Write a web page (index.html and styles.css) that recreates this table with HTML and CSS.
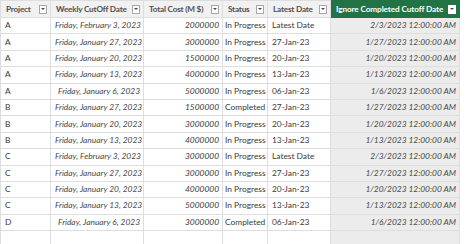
FILE: index.html
```html
<!DOCTYPE html>
<html>
<head>
<meta charset="utf-8">
<link rel="stylesheet" href="styles.css">
</head>
<body>
<table class="grid">
  <colgroup>
    <col class="c-project"><col class="c-week"><col class="c-cost"><col class="c-status"><col class="c-latest"><col class="c-ignore">
  </colgroup>
  <thead>
    <tr>
      <th><div class="hd"><span>Project</span><i class="dd"></i></div></th>
      <th><div class="hd"><span>Weekly CutOff Date</span><i class="dd"></i></div></th>
      <th><div class="hd"><span>Total Cost (M $)</span><i class="dd"></i></div></th>
      <th><div class="hd"><span>Status</span><i class="dd"></i></div></th>
      <th><div class="hd"><span>Latest Date</span><i class="dd"></i></div></th>
      <th class="sel"><div class="hd"><span>Ignore Completed Cutoff Date</span><i class="dd"></i></div></th>
    </tr>
  </thead>
  <tbody>
    <tr><td>A</td><td class="date">Friday, February 3, 2023</td><td class="num">2000000</td><td class="st">In Progress</td><td>Latest Date</td><td class="dt">2/3/2023 12:00:00 AM</td></tr>
    <tr><td>A</td><td class="date">Friday, January 27, 2023</td><td class="num">3000000</td><td class="st">In Progress</td><td>27-Jan-23</td><td class="dt">1/27/2023 12:00:00 AM</td></tr>
    <tr><td>A</td><td class="date">Friday, January 20, 2023</td><td class="num">1500000</td><td class="st">In Progress</td><td>20-Jan-23</td><td class="dt">1/20/2023 12:00:00 AM</td></tr>
    <tr><td>A</td><td class="date">Friday, January 13, 2023</td><td class="num">4000000</td><td class="st">In Progress</td><td>13-Jan-23</td><td class="dt">1/13/2023 12:00:00 AM</td></tr>
    <tr><td>A</td><td class="date">Friday, January 6, 2023</td><td class="num">5000000</td><td class="st">In Progress</td><td>06-Jan-23</td><td class="dt">1/6/2023 12:00:00 AM</td></tr>
    <tr><td>B</td><td class="date">Friday, January 27, 2023</td><td class="num">1500000</td><td class="st">Completed</td><td>27-Jan-23</td><td class="dt">1/27/2023 12:00:00 AM</td></tr>
    <tr><td>B</td><td class="date">Friday, January 20, 2023</td><td class="num">3000000</td><td class="st">In Progress</td><td>20-Jan-23</td><td class="dt">1/20/2023 12:00:00 AM</td></tr>
    <tr><td>B</td><td class="date">Friday, January 13, 2023</td><td class="num">4000000</td><td class="st">In Progress</td><td>13-Jan-23</td><td class="dt">1/13/2023 12:00:00 AM</td></tr>
    <tr><td>C</td><td class="date">Friday, February 3, 2023</td><td class="num">3000000</td><td class="st">In Progress</td><td>Latest Date</td><td class="dt">2/3/2023 12:00:00 AM</td></tr>
    <tr><td>C</td><td class="date">Friday, January 27, 2023</td><td class="num">3000000</td><td class="st">In Progress</td><td>27-Jan-23</td><td class="dt">1/27/2023 12:00:00 AM</td></tr>
    <tr><td>C</td><td class="date">Friday, January 20, 2023</td><td class="num">4000000</td><td class="st">In Progress</td><td>20-Jan-23</td><td class="dt">1/20/2023 12:00:00 AM</td></tr>
    <tr><td>C</td><td class="date">Friday, January 13, 2023</td><td class="num">5000000</td><td class="st">In Progress</td><td>13-Jan-23</td><td class="dt">1/13/2023 12:00:00 AM</td></tr>
    <tr><td>D</td><td class="date">Friday, January 6, 2023</td><td class="num">3000000</td><td class="st">Completed</td><td>06-Jan-23</td><td class="dt">1/6/2023 12:00:00 AM</td></tr>
    <tr class="filler"><td></td><td></td><td></td><td></td><td></td><td class="dt"></td></tr>
  </tbody>
</table>
</body>
</html>
```
FILE: styles.css
```css
html, body {
  margin: 0;
  padding: 0;
  background: #ffffff;
}
body {
  font-family: Lato, "Open Sans", sans-serif;
  font-size: 8.4px;
  color: #3a3a3a;
  overflow: hidden;
  height: 244px;
}
.grid {
  border-collapse: collapse;
  table-layout: fixed;
  width: 459px;
}
.c-project { width: 50px; }
.c-week { width: 93px; }
.c-cost { width: 79px; }
.c-status { width: 45px; }
.c-latest { width: 63px; }
.c-ignore { width: 129px; }

.grid th, .grid td {
  border: 1px solid #dedede;
  padding: 0 3px 0 4px;
  white-space: nowrap;
  overflow: hidden;
}
.grid th {
  height: 16px;
  background: #f1f1f1;
  color: #505050;
  font-size: 8.2px;
  font-weight: 700;
  letter-spacing: -0.2px;
  text-align: left;
  padding: 0 3px 0 5px;
}
.grid th.sel {
  background: #217346;
  color: #ffffff;
  border-color: #217346;
  font-weight: 700;
  letter-spacing: -0.1px;
}
.hd {
  display: flex;
  align-items: center;
  justify-content: space-between;
  gap: 3px;
}
.dd {
  flex: none;
  width: 6px;
  height: 7px;
  background: #ffffff;
  border: 1px solid #a8a8a8;
  position: relative;
}
.dd::after {
  content: "";
  position: absolute;
  left: 1px;
  top: 2px;
  border-left: 2px solid transparent;
  border-right: 2px solid transparent;
  border-top: 2px solid #4a4a4a;
}
.sel .dd { border-color: #ffffff; }

.grid td {
  height: 15.4px;
  line-height: 15px;
}
.grid td.st {
  padding-left: 2px;
  padding-right: 0;
}
.grid td.date {
  font-style: italic;
  text-align: right;
  color: #4a4a4a;
}
.grid td.num {
  font-style: italic;
  text-align: right;
}
.grid td.dt {
  font-style: italic;
  text-align: right;
  background: #ececec;
  color: #4a4a4a;
}
.grid tr.filler td {
  height: 13px;
  border-bottom: none;
}
```
